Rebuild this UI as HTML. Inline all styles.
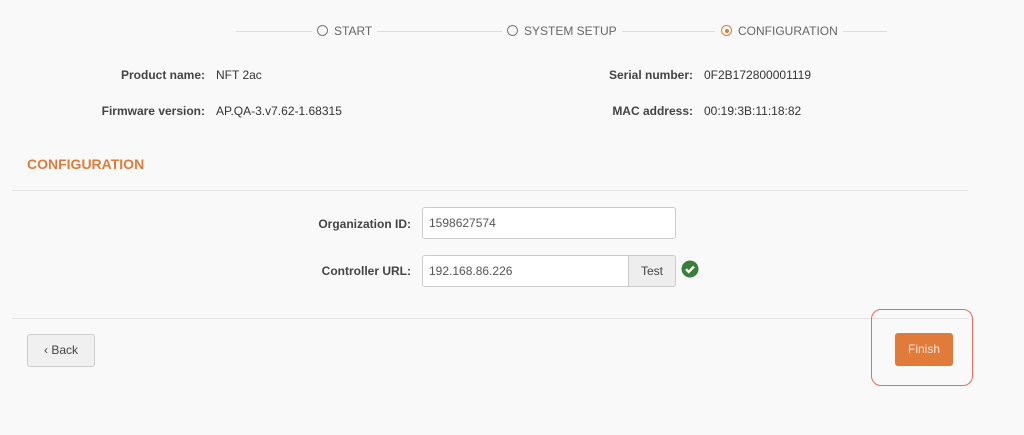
<!DOCTYPE html>
<html><head><style>
body{margin:0;width:1024px;height:435px;background:#f9f9f9;font-family:"Liberation Sans",Arial,sans-serif;position:relative;overflow:hidden;color:#333}
.a{position:absolute}
.ln{position:absolute;height:1px;background:#ddd}
.st{position:absolute;top:24px;font-size:12px;color:#666;line-height:14px}
.c{position:absolute;top:25px;width:9px;height:9px;border:1.5px solid #777;border-radius:50%}
.lb{position:absolute;font-size:12px;font-weight:bold;color:#444;text-align:right}
.v{position:absolute;font-size:12px;color:#333}
.inp{position:absolute;background:#fff;border:1px solid #ccc;border-radius:3px;box-sizing:border-box;font-size:12px;color:#555;padding:0 0 0 6px;line-height:30px}
</style></head><body>
<div class="ln" style="left:236px;width:76px;top:31px"></div>
<div class="c" style="left:317px"></div><div class="st" style="left:334px">START</div>
<div class="ln" style="left:377px;width:125px;top:31px"></div>
<div class="c" style="left:507px"></div><div class="st" style="left:524px">SYSTEM SETUP</div>
<div class="ln" style="left:622px;width:93px;top:31px"></div>
<div class="c" style="left:721px;border-color:#e07b39"><div style="position:absolute;left:2.5px;top:2.5px;width:4px;height:4px;border-radius:50%;background:#e07b39"></div></div>
<div class="st" style="left:738px">CONFIGURATION</div>
<div class="ln" style="left:843px;width:44px;top:31px"></div>

<div class="lb" style="right:819px;top:68px">Product name:</div><div class="v" style="left:216px;top:68px">NFT 2ac</div>
<div class="lb" style="right:819px;top:104px">Firmware version:</div><div class="v" style="left:216px;top:104px">AP.QA-3.v7.62-1.68315</div>
<div class="lb" style="right:331px;top:68px">Serial number:</div><div class="v" style="left:704px;top:68px">0F2B172800001119</div>
<div class="lb" style="right:331px;top:104px">MAC address:</div><div class="v" style="left:704px;top:104px">00:19:3B:11:18:82</div>

<div class="a" style="left:27px;top:156px;font-size:14px;font-weight:bold;color:#e07b39">CONFIGURATION</div>
<div class="ln" style="left:12px;width:956px;top:190px;background:#e3e3e3"></div>

<div class="lb" style="right:613px;top:217px">Organization ID:</div>
<div class="inp" style="left:422px;top:207px;width:254px;height:32px">1598627574</div>
<div class="lb" style="right:613px;top:264px">Controller URL:</div>
<div class="inp" style="left:422px;top:255px;width:254px;height:32px">192.168.86.226</div>
<div class="a" style="left:628px;top:255px;width:48px;height:32px;box-sizing:border-box;background:#eee;border:1px solid #ccc;border-radius:0 3px 3px 0;font-size:12px;text-align:center;line-height:30px;color:#444">Test</div>
<svg class="a" style="left:681px;top:260px" width="18" height="18" viewBox="0 0 18 18"><circle cx="9" cy="9" r="8.5" fill="#3b7d3b"/><path d="M5 9.2l2.7 2.7L13 6.6" stroke="#fff" stroke-width="2.4" fill="none"/></svg>

<div class="ln" style="left:12px;width:956px;top:318px;background:#e3e3e3"></div>
<div class="a" style="left:27px;top:334px;width:68px;height:33px;box-sizing:border-box;background:#f0f0f0;border:1px solid #ccc;border-radius:3px;font-size:12px;line-height:31px;color:#444;text-align:center">&#8249; Back</div>
<div class="a" style="left:895px;top:333px;width:58px;height:33px;background:#e07b39;border-radius:3px;font-size:12px;line-height:33px;color:#fde9dc;text-align:center">Finish</div>
<div class="a" style="left:871px;top:309px;width:102px;height:77px;box-sizing:border-box;border:1px solid #ef6a5a;border-radius:10px"></div>
</body></html>
